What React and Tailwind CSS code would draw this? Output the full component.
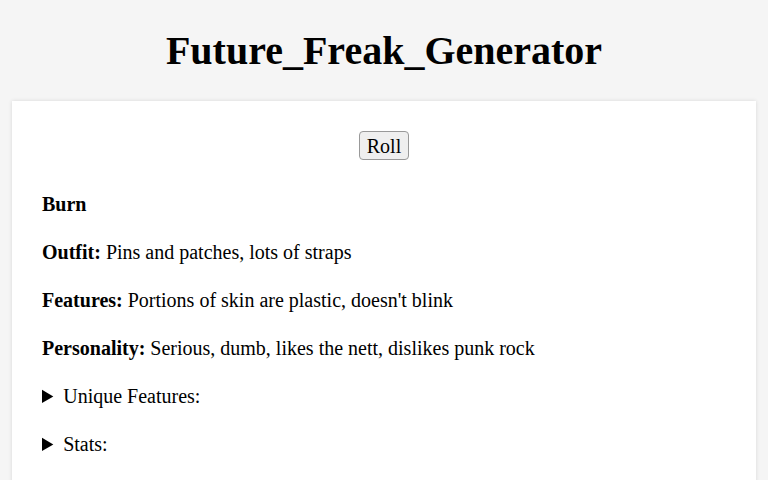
export default function App() {
  const traits = [
    ['Outfit:', 'Pins and patches, lots of straps'],
    ['Features:', "Portions of skin are plastic, doesn't blink"],
    ['Personality:', 'Serious, dumb, likes the nett, dislikes punk rock'],
  ]

  return (
    <div className="min-h-screen bg-[#f5f5f5] text-black font-['Liberation_Serif',serif]">
      <header className="h-[101px] flex items-center justify-center">
        <h1 className="text-[40px] leading-[46px] font-bold">Future_Freak_Generator</h1>
      </header>

      <main className="mx-[12px] bg-white shadow-[0_0_4px_rgba(0,0,0,0.12)] px-[30px] pt-[30px] pb-[40px]">
        <div className="flex justify-center">
          <button
            type="button"
            className="h-[29px] px-[7px] text-[20px] leading-[24px] bg-[#efefef] border border-[#999] rounded-[4px]"
          >
            Roll
          </button>
        </div>

        <div className="mt-[32px] flex flex-col gap-[24px] text-[20px] leading-[24px]">
          <p className="font-bold">Burn</p>
          {traits.map(([label, value]) => (
            <p key={label}>
              <span className="font-bold">{label}</span> {value}
            </p>
          ))}
          <details>
            <summary className="cursor-pointer">Unique Features:</summary>
          </details>
          <details>
            <summary className="cursor-pointer">Stats:</summary>
          </details>
        </div>
      </main>
    </div>
  )
}
